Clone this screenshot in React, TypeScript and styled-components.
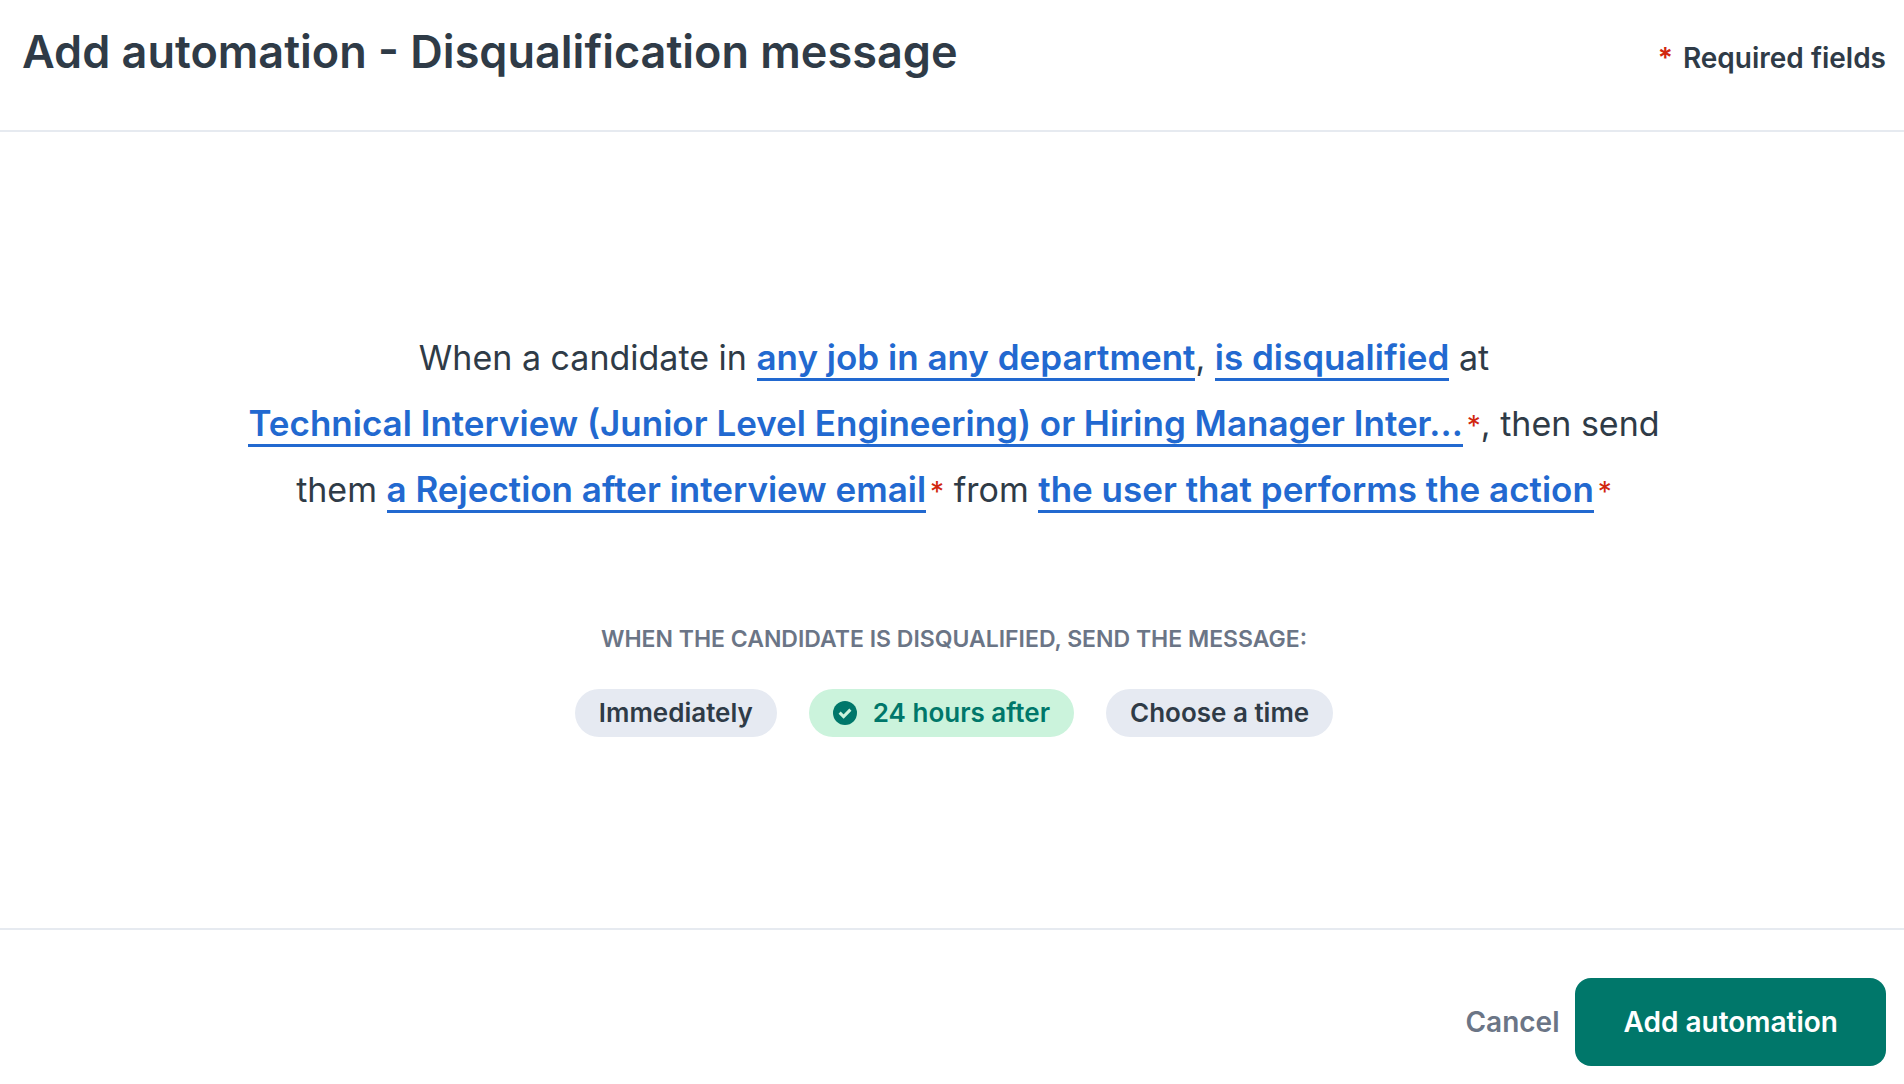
import React, { useState } from "react";
import styled, { createGlobalStyle } from "styled-components";

const Global = createGlobalStyle`
  * { box-sizing: border-box; }
  body { margin: 0; background: #fff; color: #2f3b47; font-family: Inter, "Liberation Sans", sans-serif; }
  button { font: inherit; border: 0; cursor: pointer; }
`;

const Page = styled.div`
  display: flex;
  flex-direction: column;
  min-height: 100vh;
`;

const Header = styled.header`
  display: flex;
  justify-content: space-between;
  align-items: flex-start;
  padding: 23px 18px 49px 22px;
  border-bottom: 2px solid #e6eaf0;
`;

const Title = styled.h1`
  margin: 0;
  font-size: 45px;
  line-height: 58px;
  font-weight: 600;
`;

const Required = styled.p`
  display: flex;
  gap: 10px;
  margin: 0;
  padding-top: 17px;
  font-size: 28px;
  line-height: 36px;
  font-weight: 600;
`;

const Star = styled.span`
  color: #d1260f;
`;

const FieldStar = styled(Star)`
  margin-left: 4px;
  font-size: 28px;
  line-height: 36px;
`;

const Main = styled.main`
  flex: 1;
  display: flex;
  flex-direction: column;
  align-items: center;
  justify-content: center;
  padding: 2px 0 0 4px;
`;

const Sentence = styled.p`
  margin: 0;
  font-size: 34px;
  line-height: 66px;
  text-align: center;
`;

const Line = styled.span`
  display: block;
`;

const Choice = styled.button`
  && {
    padding: 0;
    background: none;
    color: #2269d0;
    font-size: 35px;
    font-weight: 600;
    line-height: 42px;
    border-bottom: 3px solid #2269d0;
  }
`;

const Group = styled.fieldset`
  min-width: 0;
  margin: 102px 0 0;
  padding: 0;
  border: 0;
`;

const Legend = styled.legend`
  margin: 0 auto;
  padding: 0;
  color: #6b7586;
  font-size: 23px;
  line-height: 28px;
  font-weight: 600;
  text-transform: uppercase;
`;

const Pills = styled.div`
  display: flex;
  justify-content: center;
  gap: 32px;
  padding-top: 36px;
`;

const Pill = styled.label<{ $on: boolean }>`
  position: relative;
  display: flex;
  align-items: center;
  gap: 16px;
  height: 48px;
  padding: 0 24px;
  border-radius: 24px;
  background: ${(p) => (p.$on ? "#cbf3dc" : "#e6eaf2")};
  color: ${(p) => (p.$on ? "#00776a" : "#2f3b47")};
  font-size: 26px;
  line-height: 32px;
  font-weight: 600;
  cursor: pointer;
`;

const Radio = styled.input`
  position: absolute;
  inset: 0;
  width: 100%;
  height: 100%;
  margin: 0;
  opacity: 0;
  cursor: pointer;
`;

const Footer = styled.footer`
  display: flex;
  justify-content: flex-end;
  align-items: center;
  gap: 16px;
  padding: 48px 18px 18px;
  border-top: 2px solid #e6eaf0;
`;

const Cancel = styled.button`
  && {
    padding: 0;
    background: none;
    color: #6b7586;
    font-size: 28px;
    font-weight: 600;
  }
`;

const Submit = styled.button`
  && {
    height: 88px;
    padding: 0 48px;
    border-radius: 16px;
    background: #00776a;
    color: #fff;
    font-size: 28px;
    font-weight: 600;
  }
`;

const Check = () => (
  <svg width="24" height="24" viewBox="0 0 24 24" aria-hidden="true">
    <circle cx="12" cy="12" r="12" fill="#00776a" />
    <path d="M6.6 11.6l4 4 6.8-7" fill="none" stroke="#cbf3dc" strokeWidth="3" />
  </svg>
);

const times = ["Immediately", "24 hours after", "Choose a time"];

export default function App() {
  const [time, setTime] = useState(times[1]);
  return (
    <Page>
      <Global />
      <Header>
        <Title>Add automation - Disqualification message</Title>
        <Required>
          <Star>*</Star>
          <span>Required fields</span>
        </Required>
      </Header>
      <Main>
        <Sentence>
          <Line>
            When a candidate in <Choice>any job in any department</Choice>,{" "}
            <Choice>is disqualified</Choice> at
          </Line>
          <Line>
            <Choice>Technical Interview (Junior Level Engineering) or Hiring Manager Inter...</Choice>
            <FieldStar>*</FieldStar>, then send
          </Line>
          <Line>
            them <Choice>a Rejection after interview email</Choice>
            <FieldStar>*</FieldStar> from <Choice>the user that performs the action</Choice>
            <FieldStar>*</FieldStar>
          </Line>
        </Sentence>
        <Group>
          <Legend>When the candidate is disqualified, send the message:</Legend>
          <Pills>
            {times.map((t) => (
              <Pill key={t} $on={t === time}>
                <Radio type="radio" name="time" checked={t === time} onChange={() => setTime(t)} />
                {t === time && <Check />}
                {t}
              </Pill>
            ))}
          </Pills>
        </Group>
      </Main>
      <Footer>
        <Cancel>Cancel</Cancel>
        <Submit>Add automation</Submit>
      </Footer>
    </Page>
  );
}
